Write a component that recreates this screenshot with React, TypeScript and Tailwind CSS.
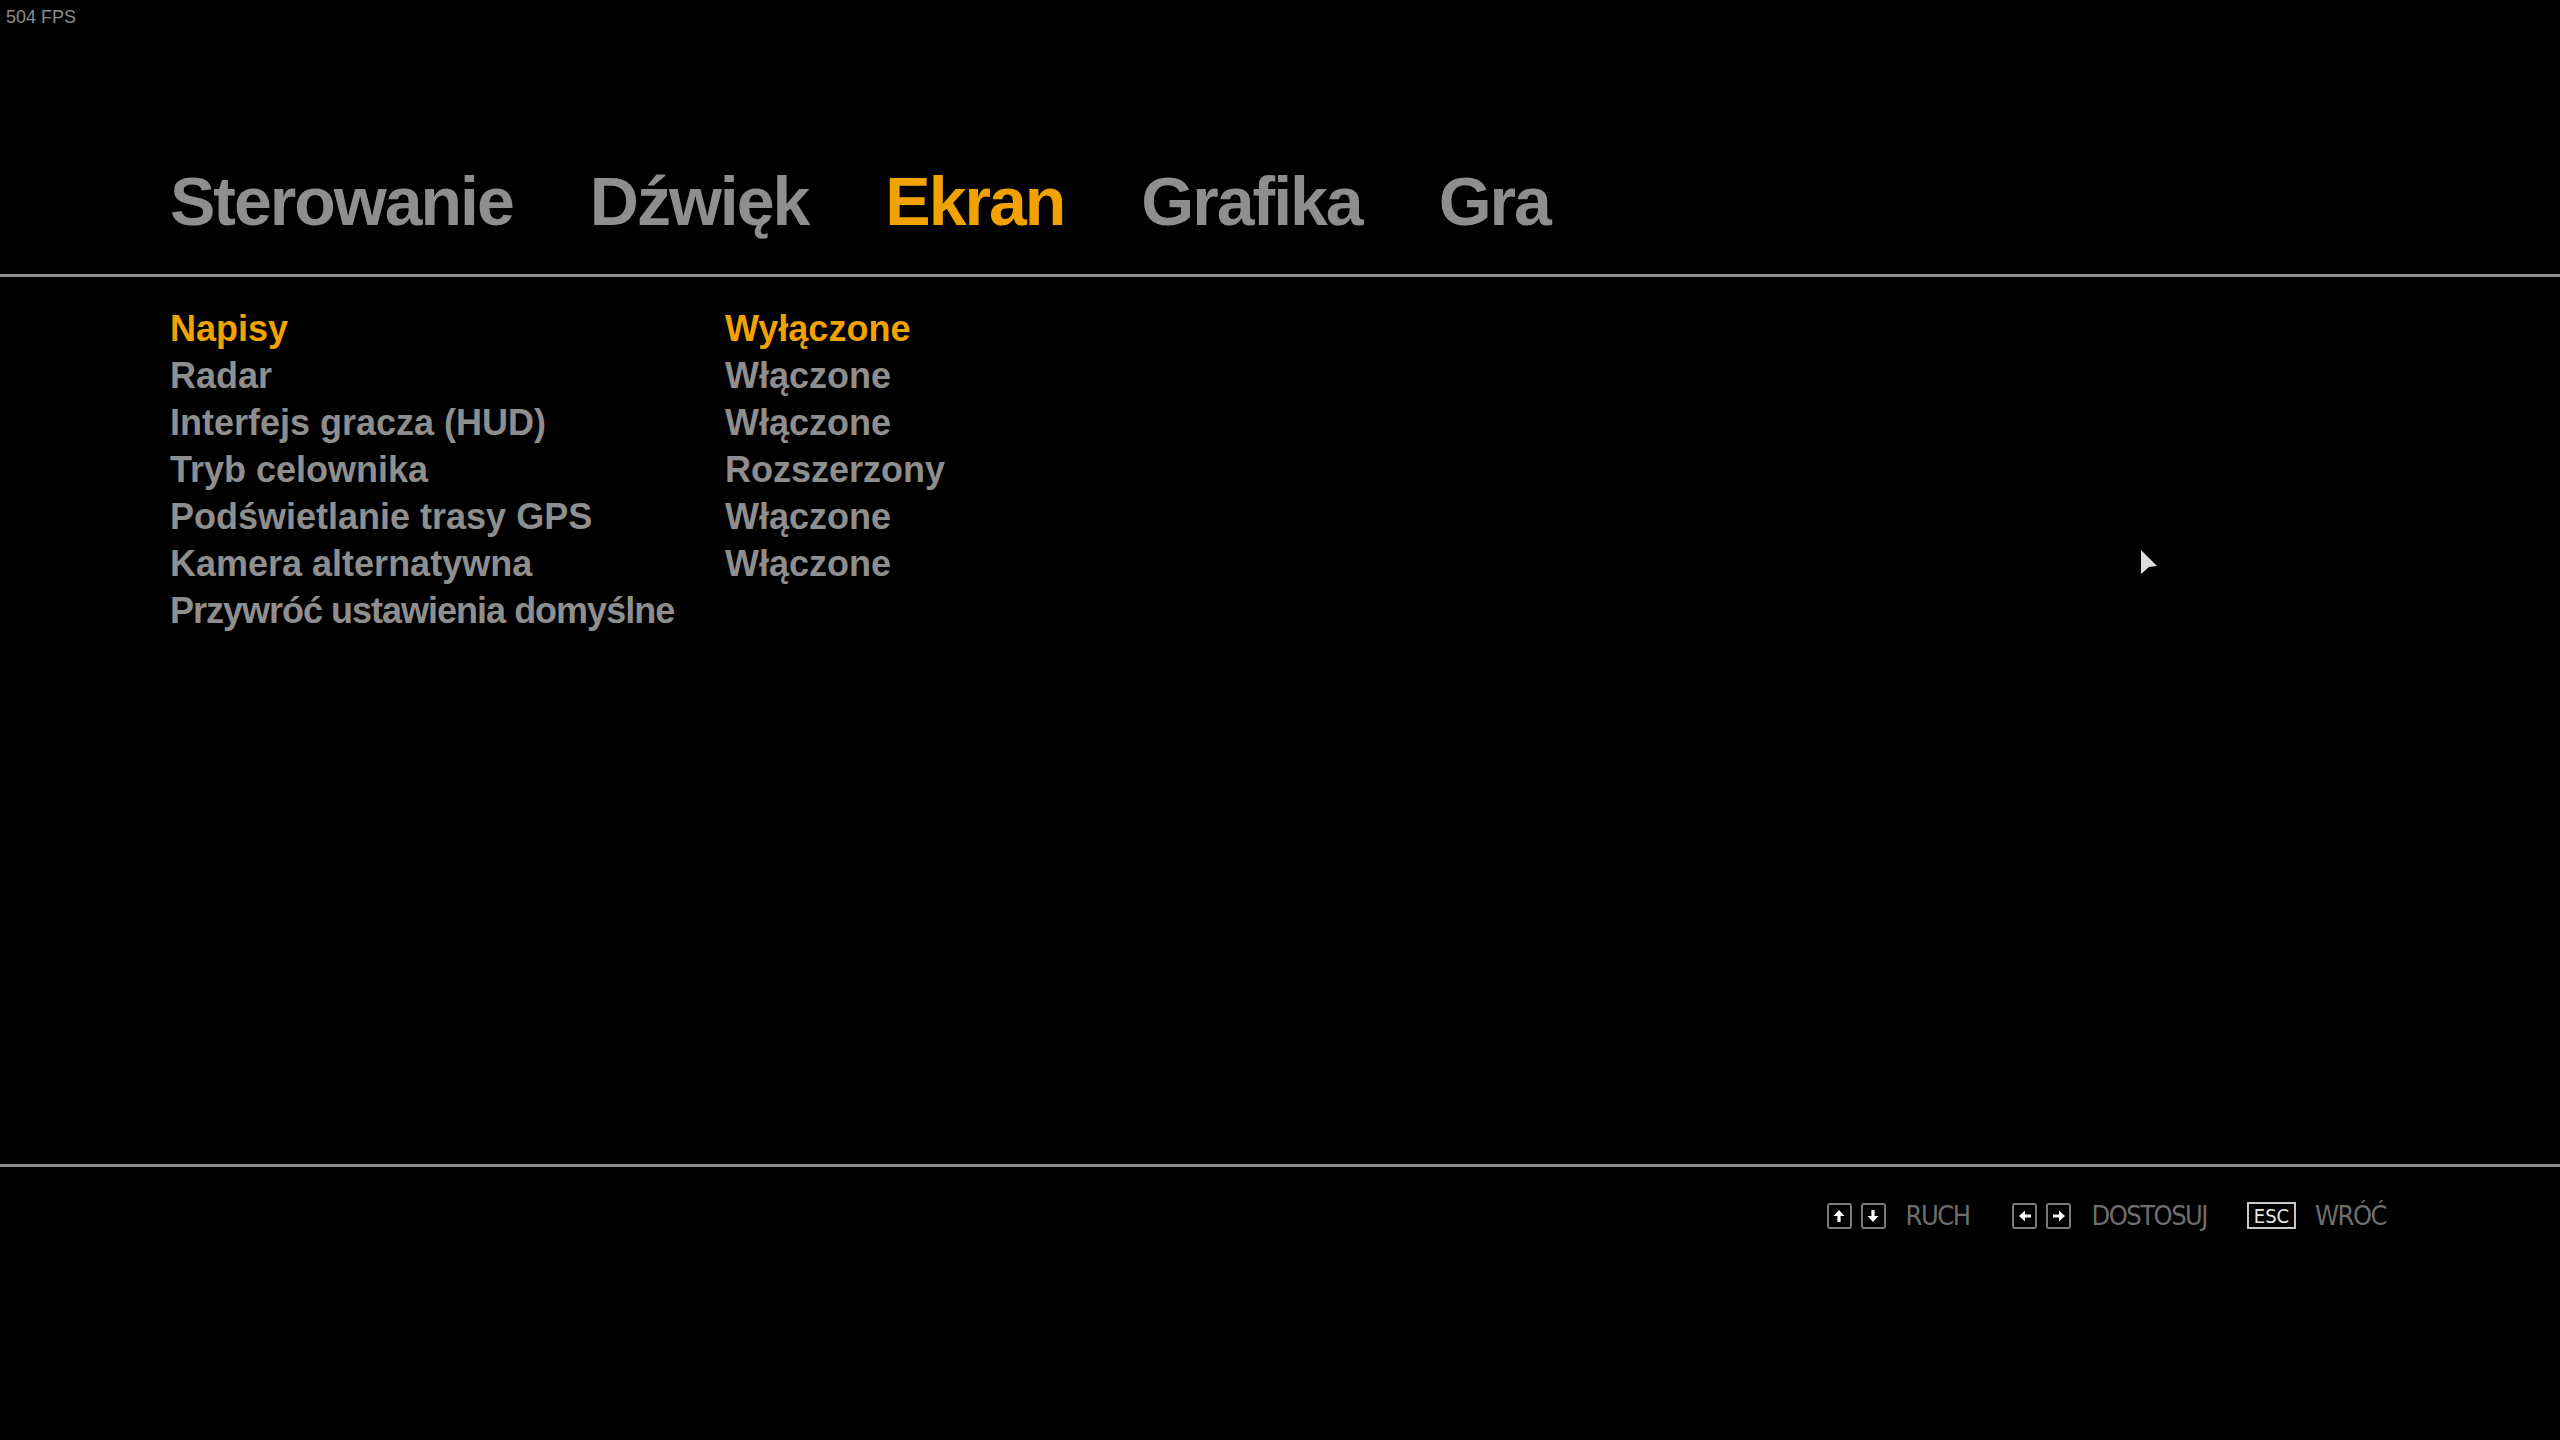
import React from 'react';

const tabs = [
  { label: 'Sterowanie', active: false },
  { label: 'Dźwięk', active: false },
  { label: 'Ekran', active: true },
  { label: 'Grafika', active: false },
  { label: 'Gra', active: false },
];

const rows: { label: string; value?: string; active?: boolean }[] = [
  { label: 'Napisy', value: 'Wyłączone', active: true },
  { label: 'Radar', value: 'Włączone' },
  { label: 'Interfejs gracza (HUD)', value: 'Włączone' },
  { label: 'Tryb celownika', value: 'Rozszerzony' },
  { label: 'Podświetlanie trasy GPS', value: 'Włączone' },
  { label: 'Kamera alternatywna', value: 'Włączone' },
  { label: 'Przywróć ustawienia domyślne' },
];

type Dir = 'up' | 'down' | 'left' | 'right';

function ArrowKey({ dir }: { dir: Dir }) {
  const rotate = { up: 0, right: 90, down: 180, left: 270 }[dir];
  return (
    <div className="flex h-[26px] w-[25px] items-center justify-center rounded-[3px] border-2 border-[#7a7a7a]">
      <svg width="14" height="14" viewBox="0 0 14 14" style={{ transform: `rotate(${rotate}deg)` }}>
        <path d="M7 1 L12.5 7 H8.6 V13 H5.4 V7 H1.5 Z" fill="#ffffff" />
      </svg>
    </div>
  );
}

export default function App() {
  return (
    <div className="relative h-[1440px] w-full overflow-hidden bg-black font-['Liberation_Sans',Arial,sans-serif]">
      {/* fps counter */}
      <div className="absolute left-[6px] top-[8px] text-[18px] leading-none text-[#8c8c8c]">504 FPS</div>

      {/* Tabs */}
      <nav className="flex gap-[77px] pl-[170px] pt-[167px]">
        {tabs.map((t) => (
          <span
            key={t.label}
            className={`text-[68px] font-bold leading-none tracking-[-2px] ${t.active ? 'text-[#f2a200]' : 'text-[#8e8e8e]'}`}
          >
            {t.label}
          </span>
        ))}
      </nav>

      <div className="mt-[39px] h-[3px] bg-[#8e8e8e]" />

      {/* Settings list */}
      <div className="h-[887px] pl-[170px] pt-[28px]">
        {rows.map((r) => (
          <div
            key={r.label}
            className={`flex h-[47px] text-[36px] font-bold leading-[47px] ${r.active ? 'text-[#f2a200]' : 'text-[#8e8e8e]'}`}
          >
            <span className={`w-[555px] shrink-0 ${r.value ? '' : 'tracking-[-1px]'}`}>{r.label}</span>
            {r.value && <span>{r.value}</span>}
          </div>
        ))}
      </div>

      <div className="h-[3px] bg-[#8e8e8e]" />

      {/* Footer hints */}
      <div className="flex items-center justify-end pr-[174px] pt-[35px] font-['Liberation_Sans_Narrow','DejaVu_Sans_Condensed',Roboto,sans-serif] text-[27px] leading-none tracking-[-1.5px] text-[#6e6e6e]">
        <div className="flex items-center gap-[9px]">
          <ArrowKey dir="up" />
          <ArrowKey dir="down" />
        </div>
        <span className="ml-[20px]">RUCH</span>
        <div className="ml-[43px] flex items-center gap-[9px]">
          <ArrowKey dir="left" />
          <ArrowKey dir="right" />
        </div>
        <span className="ml-[20px]">DOSTOSUJ</span>
        <div className="ml-[40px] flex h-[27px] w-[49px] items-center justify-center border-2 border-[#c8c8c8] text-[20px] tracking-normal text-[#e6e6e6]">
          ESC
        </div>
        <span className="ml-[19px]">WRÓĆ</span>
      </div>

      {/* mouse cursor */}
      <svg className="absolute left-[2141px] top-[550px]" width="18" height="26" viewBox="0 0 18 26">
        <polygon points="0,0 16,16 8,17 0,24" fill="#dcdcdc" />
      </svg>
    </div>
  );
}
